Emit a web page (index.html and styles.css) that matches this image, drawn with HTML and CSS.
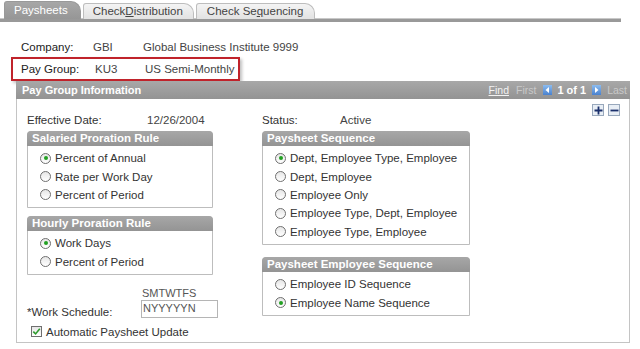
FILE: index.html
```html
<!DOCTYPE html>
<html>
<head>
<meta charset="utf-8">
<link rel="stylesheet" href="styles.css">
</head>
<body>
<div class="tabs">
  <div class="tab active">Paysheets</div>
  <div class="tab">Check<u>D</u>istribution</div>
  <div class="tab">Check Se<u>q</u>uencing</div>
</div>

<div class="keys">
  <div class="krow">
    <span class="klabel">Company:</span><span class="kcode">GBI</span><span class="kdesc">Global Business Institute 9999</span>
  </div>
  <div class="krow highlight">
    <span class="klabel">Pay Group:</span><span class="kcode">KU3</span><span class="kdesc">US Semi-Monthly</span>
  </div>
</div>

<div class="panel">
  <div class="panel-head">
    <span class="ptitle">Pay Group Information</span>
    <span class="nav">
      <span class="find">Find</span>
      <span class="dim">First</span>
      <span class="arrow a-left"><svg width="9" height="10" viewBox="0 0 9 10"><path d="M6 2 L2.5 5 L6 8 Z" fill="#fff"/></svg></span>
      <span class="count">1 of 1</span>
      <span class="arrow a-right"><svg width="9" height="10" viewBox="0 0 9 10"><path d="M3 2 L6.5 5 L3 8 Z" fill="#fff"/></svg></span>
      <span class="dim">Last</span>
    </span>
  </div>
  <div class="panel-body">
    <div class="addrem">
      <span class="btn"><svg width="9" height="9" viewBox="0 0 9 9"><path d="M4.5 0.5 V8.5 M0.5 4.5 H8.5" stroke="#1a2f6b" stroke-width="1.8"/></svg></span>
      <span class="btn"><svg width="9" height="9" viewBox="0 0 9 9"><path d="M0.5 4.5 H8.5" stroke="#1a2f6b" stroke-width="1.8"/></svg></span>
    </div>
    <div class="col left">
      <div class="field"><span class="flabel eff">Effective Date:</span><span class="fval">12/26/2004</span></div>
      <div class="group">
        <div class="ghead">Salaried Proration Rule</div>
        <div class="gbody">
          <div class="opt"><span class="radio on"></span>Percent of Annual</div>
          <div class="opt"><span class="radio"></span>Rate per Work Day</div>
          <div class="opt"><span class="radio"></span>Percent of Period</div>
        </div>
      </div>
      <div class="group">
        <div class="ghead">Hourly Proration Rule</div>
        <div class="gbody">
          <div class="opt"><span class="radio on"></span>Work Days</div>
          <div class="opt"><span class="radio"></span>Percent of Period</div>
        </div>
      </div>
      <div class="sched">
        <span class="slabel">*Work Schedule:</span>
        <div class="sinput">
          <span class="days">SMTWTFS</span>
          <span class="input">NYYYYYN</span>
        </div>
      </div>
      <div class="check-row">
        <span class="checkbox"><svg width="9" height="9" viewBox="0 0 9 9"><path d="M1.3 4.6 L3.6 6.9 L7.8 1.8" fill="none" stroke="#2e9b2e" stroke-width="1.6"/></svg></span>
        Automatic Paysheet Update
      </div>
    </div>
    <div class="col right">
      <div class="field"><span class="flabel st">Status:</span><span class="fval">Active</span></div>
      <div class="group wide">
        <div class="ghead">Paysheet Sequence</div>
        <div class="gbody">
          <div class="opt"><span class="radio on"></span>Dept, Employee Type, Employee</div>
          <div class="opt"><span class="radio"></span>Dept, Employee</div>
          <div class="opt"><span class="radio"></span>Employee Only</div>
          <div class="opt"><span class="radio"></span>Employee Type, Dept, Employee</div>
          <div class="opt"><span class="radio"></span>Employee Type, Employee</div>
        </div>
      </div>
      <div class="group wide emp">
        <div class="ghead">Paysheet Employee Sequence</div>
        <div class="gbody">
          <div class="opt"><span class="radio"></span>Employee ID Sequence</div>
          <div class="opt"><span class="radio on"></span>Employee Name Sequence</div>
        </div>
      </div>
    </div>
  </div>
</div>
</body>
</html>
```

FILE: styles.css
```css
* { box-sizing: border-box; }
html, body { margin: 0; padding: 0; background: #fff; }
body {
  font-family: "Liberation Sans", Arial, sans-serif;
  font-size: 11.5px;
  color: #333;
  width: 640px;
  height: 349px;
  overflow: hidden;
}

.tabs {
  display: flex;
  align-items: flex-end;
  gap: 2px;
  width: 621px;
  height: 22px;
  padding: 0 0 0 4px;
  border-bottom: 3px solid #999;
  box-shadow: 0 -1px 0 #c8c8c8 inset;
}
.tab {
  height: 16px;
  line-height: 15px;
  padding: 0 10px 0 9px;
  background: linear-gradient(#f4f4f4, #e2e2e2);
  border: 1px solid #bdbdbd;
  border-bottom: none;
  border-radius: 3px 10px 0 0;
  color: #444;
  font-size: 11.5px;
}
.tab + .tab + .tab { padding: 0 11px 0 10px; }
.tab u { text-decoration: underline; }
.tab.active {
  height: 18px;
  line-height: 17px;
  padding: 0 12px 0 9px;
  background: linear-gradient(#a7a7a7, #969696);
  border-color: #999;
  color: #fff;
}

.keys {
  padding: 18px 0 0 11px;
}
.krow {
  display: flex;
  align-items: center;
  height: 14px;
  padding-left: 10px;
}
.klabel { width: 72px; color: #222; }
.kcode { width: 50px; color: #444; }
.kdesc { color: #444; }
.krow.highlight {
  margin-top: 3px;
  width: 229px;
  height: 24px;
  padding-left: 8px;
  border: 2px solid #c0232b;
  box-shadow: 2px 2px 3px rgba(0, 0, 0, 0.25);
}
.krow.highlight .klabel { width: 74px; }

.panel {
  margin-left: 16px;
  width: 614px;
  height: 262px;
  border: 1px solid #c4c4c4;
  border-top: none;
}
.panel-head {
  display: flex;
  align-items: center;
  justify-content: space-between;
  height: 18px;
  margin: 0 -1px;
  padding: 0 3px 0 6px;
  background: linear-gradient(#a8a8a8, #939393);
  color: #fff;
  font-weight: bold;
  font-size: 11px;
}
.nav {
  display: flex;
  align-items: center;
  font-weight: normal;
  font-size: 10.5px;
}
.find { color: #f2f2f2; text-decoration: underline; margin-right: 7px; }
.dim { color: #c9c9c9; }
.arrow {
  display: inline-flex;
  align-items: center;
  justify-content: center;
  width: 9px;
  height: 10px;
  background: linear-gradient(#8cbcef, #4a82cf);
}
.a-left { margin: 0 5px 0 7px; }
.a-right { margin: 0 6px 0 6px; }
.count { color: #fff; font-weight: bold; font-size: 11px; }

.panel-body {
  position: relative;
  display: grid;
  grid-template-columns: 235px 1fr;
  padding: 14px 0 0 10px;
}
.addrem {
  position: absolute;
  top: 5px;
  right: 9px;
  display: flex;
  gap: 4px;
}
.btn {
  display: inline-flex;
  align-items: center;
  justify-content: center;
  width: 12px;
  height: 12px;
  border: 1px solid #98a8bc;
  background: #e8eef5;
}

.field {
  display: flex;
  align-items: center;
  height: 14px;
}
.flabel.eff { width: 120px; }
.flabel.st { width: 78px; }
.fval { color: #444; }

.group {
  width: 186px;
  margin-top: 4px;
  border: 1px solid #bdbdbd;
  border-radius: 4px 4px 0 0;
}
.group + .group { margin-top: 8px; }
.group.wide { width: 208px; }
.group.emp { margin-top: 12px; }
.ghead {
  height: 15px;
  line-height: 15px;
  margin: -1px -1px 0;
  padding-left: 5px;
  background: linear-gradient(#a7a7a7, #949494);
  border-radius: 4px 4px 0 0;
  color: #fff;
  font-weight: bold;
  font-size: 11.5px;
}
.gbody {
  padding: 3px 0 3px 12px;
}
.opt {
  display: flex;
  align-items: center;
  height: 18.4px;
  color: #333;
}
.radio {
  position: relative;
  display: inline-block;
  width: 11px;
  height: 11px;
  margin-right: 4px;
  border: 1px solid #6f6f6f;
  border-radius: 50%;
  background: linear-gradient(#e6e6e6, #fff);
}
.radio.on::after {
  content: "";
  position: absolute;
  left: 2.5px;
  top: 2.5px;
  width: 4px;
  height: 4px;
  border-radius: 50%;
  background: #22a022;
}

.sched {
  display: flex;
  align-items: flex-end;
  margin-top: 12px;
}
.slabel { width: 114px; padding-bottom: 0; }
.sinput { display: flex; flex-direction: column; }
.days { color: #555; height: 12px; line-height: 12px; margin-bottom: 1px; padding-left: 1px; font-size: 11px; }
.input {
  width: 77px;
  height: 18px;
  line-height: 15px;
  padding-left: 1px;
  border: 1px solid #b5b5b5;
  color: #555;
  font-size: 11px;
}
.check-row {
  display: flex;
  align-items: center;
  margin-top: 8px;
  padding-left: 4px;
}
.checkbox {
  display: inline-flex;
  align-items: center;
  justify-content: center;
  width: 11px;
  height: 11px;
  margin-right: 4px;
  border: 1px solid #6f6f6f;
  background: linear-gradient(#e6e6e6, #fff);
}
```
